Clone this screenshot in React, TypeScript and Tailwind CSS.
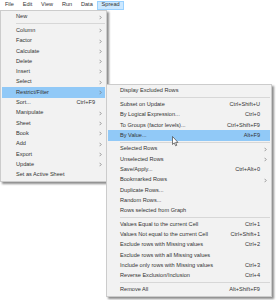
import React from "react";

type Entry = { label: string; shortcut?: string; sub?: boolean; active?: boolean } | "sep";

const menuBar = ["File", "Edit", "View", "Run", "Data", "Spread"];

const spreadMenu: Entry[] = [
  { label: "New", sub: true },
  "sep",
  { label: "Column", sub: true },
  { label: "Factor", sub: true },
  { label: "Calculate", sub: true },
  { label: "Delete", sub: true },
  { label: "Insert", sub: true },
  { label: "Select", sub: true },
  { label: "Restrict/Filter", sub: true, active: true },
  { label: "Sort...", shortcut: "Ctrl+F9" },
  { label: "Manipulate", sub: true },
  { label: "Sheet", sub: true },
  { label: "Book", sub: true },
  { label: "Add", sub: true },
  { label: "Export", sub: true },
  { label: "Update", sub: true },
  { label: "Set as Active Sheet" },
];

const filterMenu: Entry[] = [
  { label: "Display Excluded Rows" },
  "sep",
  { label: "Subset on Update", shortcut: "Ctrl+Shift+U" },
  { label: "By Logical Expression...", shortcut: "Ctrl+0" },
  { label: "To Groups (factor levels)...", shortcut: "Ctrl+Shift+F9" },
  { label: "By Value...", shortcut: "Alt+F9", active: true },
  "sep",
  { label: "Selected Rows", sub: true },
  { label: "Unselected Rows", sub: true },
  { label: "Save/Apply...", shortcut: "Ctrl+Alt+0" },
  { label: "Bookmarked Rows", sub: true },
  { label: "Duplicate Rows..." },
  { label: "Random Rows..." },
  { label: "Rows selected from Graph" },
  "sep",
  { label: "Values Equal to the current Cell", shortcut: "Ctrl+1" },
  { label: "Values Not equal to the current Cell", shortcut: "Ctrl+Shift+1" },
  { label: "Exclude rows with Missing values", shortcut: "Ctrl+2" },
  { label: "Exclude rows with all Missing values" },
  { label: "Include only rows with Missing values", shortcut: "Ctrl+3" },
  { label: "Reverse Exclusion/Inclusion", shortcut: "Ctrl+4" },
  "sep",
  { label: "Remove All", shortcut: "Alt+Shift+F9" },
];

const Chevron = () => (
  <svg width="3" height="5" viewBox="0 0 3 5" className="shrink-0">
    <polyline points="0.6,0.8 2.2,2.5 0.6,4.2" fill="none" stroke="#777" strokeWidth="0.7" />
  </svg>
);

const Menu = ({ entries, textPad }: { entries: Entry[]; textPad: string }) => (
  <div className="flex flex-col border border-[#cccccc] bg-[#f2f2f2] px-[1px] py-[1px] shadow-[2px_2px_2px_rgba(0,0,0,0.45)]">
    {entries.map((e, i) =>
      e === "sep" ? (
        <div key={i} className={`flex h-[3.3px] items-center ${textPad}`}>
          <div className="h-px w-full bg-[#d7d7d7]" />
        </div>
      ) : (
        <div
          key={i}
          className={`flex h-[10.3px] items-center pr-[3px] ${textPad} ${e.active ? "bg-[#91c9f7]" : ""}`}
        >
          <span className="flex-1 whitespace-nowrap">{e.label}</span>
          {e.shortcut && <span className="mr-[4px] whitespace-nowrap">{e.shortcut}</span>}
          <span className="flex w-[3px] justify-end">{e.sub && <Chevron />}</span>
        </div>
      )
    )}
  </div>
);

export default function App() {
  return (
    <div className="relative h-[300px] w-[276px] overflow-hidden bg-white font-['Liberation_Sans',Arial,sans-serif] text-[5.6px] leading-none text-[#333]">
      <div className="flex h-[10px] items-center pl-[0.5px]">
        {menuBar.map((m) => (
          <div
            key={m}
            className={`flex h-[9px] items-center border px-[3.4px] ${
              m === "Spread" ? "border-[#99d1ff] bg-[#cce8ff]" : "border-transparent"
            }`}
          >
            {m}
          </div>
        ))}
      </div>

      <div className="absolute left-0 top-[10px] w-[107px]">
        <Menu entries={spreadMenu} textPad="pl-[14px]" />
      </div>

      <div className="absolute left-[106px] top-[84px] w-[166px]">
        <Menu entries={filterMenu} textPad="pl-[12px]" />
      </div>

      <svg className="absolute left-[172px] top-[136px]" width="7" height="11" viewBox="0 0 7 11">
        <path
          d="M0.5 0.5 L0.5 8.5 L2.3 6.8 L3.6 9.8 L4.8 9.3 L3.6 6.4 L6 6.4 Z"
          fill="#fff"
          stroke="#444"
          strokeWidth="0.7"
          strokeLinejoin="round"
        />
      </svg>
    </div>
  );
}
